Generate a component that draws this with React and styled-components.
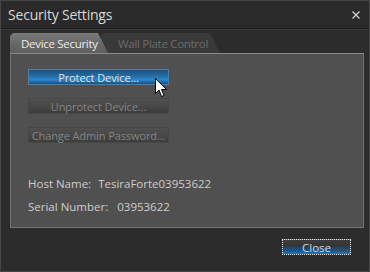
import React from 'react'
import styled, { createGlobalStyle } from 'styled-components'

const Global = createGlobalStyle`
  html, body {
    margin: 0;
    padding: 0;
    background: #2b2b2b;
  }
  body {
    font-family: "Open Sans", "DejaVu Sans", sans-serif;
  }
`;

const Window = styled.div`
  width: 370px;
  height: 272px;
  box-sizing: border-box;
  border: 1px solid #474747;
  background: #2c2c2c;
  display: flex;
  flex-direction: column;
  position: relative;
  overflow: hidden;
`;

const TitleBar = styled.div`
  height: 27px;
  flex: none;
  display: flex;
  align-items: center;
  justify-content: space-between;
  padding: 0 9px 0 7px;
  background: #2a2a2a;
  border-bottom: 1px solid #1b1b1b;
  box-shadow: 0 1px 0 #3a3a3a;
`;

const Title = styled.div`
  color: #d8d8d8;
  font-family: "Open Sans", sans-serif;
  font-size: 14px;
  letter-spacing: -0.2px;
`;

const CloseX = styled.svg`
  display: block;
`;

const Body = styled.div`
  flex: 1;
  display: flex;
  flex-direction: column;
  padding: 4px 6px 0 9px;
`;

const Tabs = styled.div`
  height: 20px;
  display: flex;
`;

const Tab = styled.div`
  height: 20px;
  box-sizing: border-box;
  display: flex;
  align-items: center;
  font-family: "Open Sans", sans-serif;
  font-size: 11.5px;
  letter-spacing: -0.3px;
  color: ${({ active }) => (active ? '#ececec' : '#6c6c6c')};
  background: ${({ active }) =>
    active ? 'linear-gradient(#7a7a7a, #666 60%, #5e5e5e)' : '#393939'};
  width: ${({ w }) => w}px;
  margin-left: ${({ shift }) => shift || 0}px;
  padding-left: ${({ pad }) => pad}px;
  clip-path: polygon(0 3px, 3px 0, calc(100% - 10px) 0, 100% 100%, 0 100%);
  z-index: ${({ active }) => (active ? 2 : 1)};
`;

const Panel = styled.div`
  height: 175px;
  box-sizing: border-box;
  width: 354px;
  background: #505050;
  border: 1px solid #727272;
  border-top-color: #8a8a8a;
  display: flex;
  flex-direction: column;
  padding: 15px 0 0 17px;
`;

const Buttons = styled.div`
  display: flex;
  flex-direction: column;
  gap: 13px;
`;

const Button = styled.div`
  width: 141px;
  height: 16px;
  box-sizing: border-box;
  display: flex;
  align-items: center;
  justify-content: center;
  font-family: "Open Sans", sans-serif;
  font-size: 11px;
  letter-spacing: -0.1px;
  color: ${({ primary }) => (primary ? '#e4e4e4' : '#858585')};
  border: 1px solid ${({ primary }) => (primary ? '#4f7fa6' : '#474747')};
  background: ${({ primary }) =>
    primary
      ? 'linear-gradient(#1c4f7c, #256ea8 45%, #2b86cc 70%, #16507f)'
      : 'linear-gradient(#4f4f4f, #484848 50%, #3c3c3c)'};
`;

const Info = styled.div`
  margin-top: 34px;
  display: flex;
  flex-direction: column;
  gap: 9px;
`;

const InfoRow = styled.div`
  display: flex;
  font-family: "Open Sans", sans-serif;
  font-size: 11.5px;
  color: #cdcdcd;
  height: 14px;
  line-height: 14px;
  white-space: nowrap;
`;

const Value = styled.span`
  margin-left: ${({ gap }) => gap}px;
`;

const Footer = styled.div`
  display: flex;
  justify-content: flex-end;
  padding: 11px 12px 0 0;
`;

const CloseButton = styled.div`
  width: 69px;
  height: 16px;
  box-sizing: border-box;
  border: 1px dotted #e8e8e8;
  background: linear-gradient(#3c3c3c, #353535 40%, #1c5a90 80%, #1f78bf);
  color: #d6d6d6;
  font-family: "Open Sans", sans-serif;
  font-size: 11.5px;
  display: flex;
  align-items: center;
  justify-content: center;
`;

const Cursor = styled.svg`
  position: absolute;
  left: 154px;
  top: 77px;
  z-index: 5;
`;

export default function App() {
  return (
    <>
      <Global />
      <Window>
        <TitleBar>
          <Title>Security Settings</Title>
          <CloseX width="8" height="8" viewBox="0 0 8 8">
            <path d="M0.5 0.5 L7.5 7.5 M7.5 0.5 L0.5 7.5" stroke="#d0d0d0" strokeWidth="1.3" />
          </CloseX>
        </TitleBar>
        <Body>
          <Tabs>
            <Tab active w={98} pad={11}>Device Security</Tab>
            <Tab w={119} shift={-7} pad={17}>Wall Plate Control</Tab>
          </Tabs>
          <Panel>
            <Buttons>
              <Button primary>Protect Device...</Button>
              <Button>Unprotect Device...</Button>
              <Button>Change Admin Password...</Button>
            </Buttons>
            <Info>
              <InfoRow>Host Name:<Value gap={7}>TesiraForte03953622</Value></InfoRow>
              <InfoRow>Serial Number:<Value gap={9}>03953622</Value></InfoRow>
            </Info>
          </Panel>
          <Footer>
            <CloseButton>Close</CloseButton>
          </Footer>
        </Body>
        <Cursor width="13" height="20" viewBox="0 0 13 20">
          <path
            d="M0.5 0.5 L0.5 15.5 L4 12 L6.5 18.5 L9 17.5 L6.5 11.5 L11.5 11.5 Z"
            fill="#fff"
            stroke="#000"
            strokeWidth="1"
          />
        </Cursor>
      </Window>
    </>
  )
}
